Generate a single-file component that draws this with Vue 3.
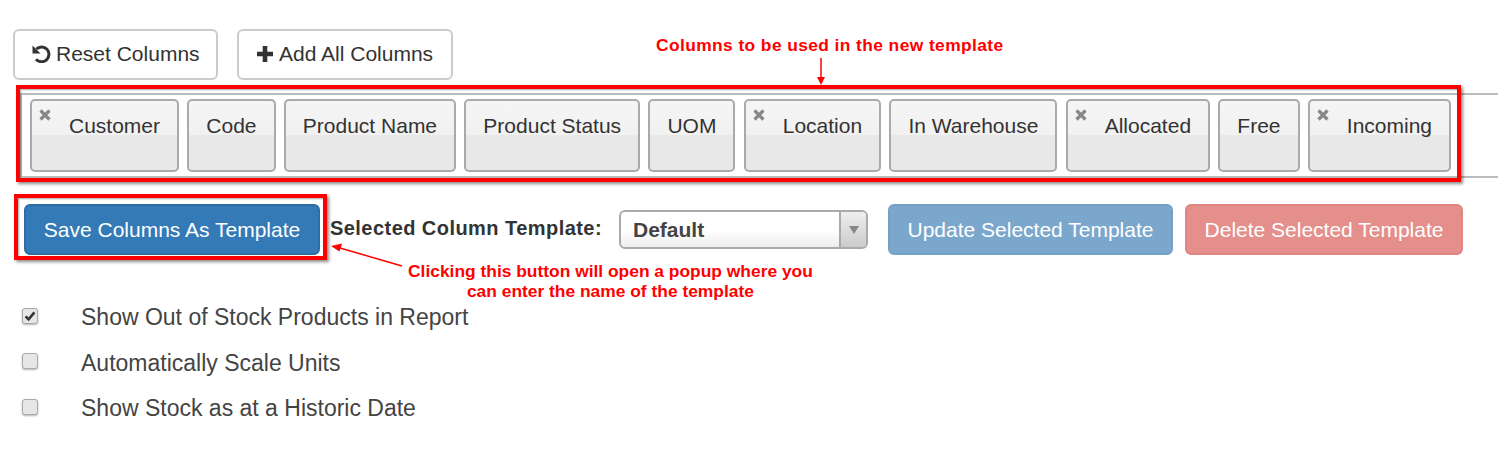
<script setup>
const columns = [
  { name: 'Customer', removable: true },
  { name: 'Code' },
  { name: 'Product Name' },
  { name: 'Product Status' },
  { name: 'UOM' },
  { name: 'Location', removable: true },
  { name: 'In Warehouse' },
  { name: 'Allocated', removable: true },
  { name: 'Free' },
  { name: 'Incoming', removable: true },
]

const options = [
  { label: 'Show Out of Stock Products in Report', checked: true },
  { label: 'Automatically Scale Units', checked: false },
  { label: 'Show Stock as at a Historic Date', checked: false },
]
</script>

<template>
  <div class="page">
    <div class="toolbar">
      <button class="btn btn-reset">
        <svg class="icon-reset" viewBox="0 0 19 19" width="19" height="19">
          <path d="M4.4 5A7.4 7.4 0 1 1 4 15.2" fill="none" stroke="#333" stroke-width="3" />
          <path d="M0.5 1.5V9.5H8.5z" fill="#333" />
        </svg>
        Reset Columns
      </button>
      <button class="btn btn-add">
        <svg class="icon-plus" viewBox="0 0 16 16" width="16" height="16">
          <path d="M5.7 0h4.6v5.7H16v4.6h-5.7V16H5.7v-5.7H0V5.7h5.7z" fill="#333" />
        </svg>
        Add All Columns
      </button>
    </div>

    <div class="column-bar">
      <div
        v-for="col in columns"
        :key="col.name"
        class="chip"
        :class="{ removable: col.removable }"
      >
        <svg v-if="col.removable" class="chip-x" viewBox="0 0 12 12" width="12" height="12">
          <path d="M1.5 1.5l9 9M10.5 1.5l-9 9" stroke="#888" stroke-width="3.2" />
        </svg>
        {{ col.name }}
      </div>
      <div class="mark mark-columns"></div>
    </div>

    <div class="template-row">
      <div class="save-wrap">
        <button class="btn-solid btn-save">Save Columns As Template</button>
        <div class="mark mark-save"></div>
      </div>
      <span class="template-label">Selected Column Template:</span>
      <div class="select">
        <span class="select-value">Default</span>
        <span class="select-arrow"><i></i></span>
      </div>
      <button class="btn-solid btn-update">Update Selected Template</button>
      <button class="btn-solid btn-delete">Delete Selected Template</button>
    </div>

    <div class="options">
      <label v-for="opt in options" :key="opt.label" class="option">
        <span class="check">
          <svg v-if="opt.checked" viewBox="0 0 12 12" width="12" height="12">
            <path d="M1.6 6.4l3 3 5.8-7" fill="none" stroke="#333" stroke-width="2.6" />
          </svg>
        </span>
        <span>{{ opt.label }}</span>
      </label>
    </div>

    <!-- annotations on top of the screenshot -->
    <div class="note note-columns">Columns to be used in the new template</div>
    <div class="note note-save">Clicking this button will open a popup where you<br>can enter the name of the template</div>
    <svg class="arrows" width="1498" height="462" viewBox="0 0 1498 462">
      <path d="M821 58v20" stroke="#f00" stroke-width="1.5" />
      <path d="M817 77h8l-4 8z" fill="#f00" />
      <path d="M402 266L340 248" stroke="#f00" stroke-width="1.5" />
      <path d="M331 246l11-2.5-2.5 8z" fill="#f00" />
    </svg>
  </div>
</template>

<style>
html, body {
  margin: 0;
  background: #fff;
}
</style>

<style scoped>
.page {
  position: relative;
  box-sizing: border-box;
  width: 1498px;
  height: 462px;
  padding: 29px 0 0 13px;
  overflow: hidden;
  font-family: "Liberation Sans", Arial, sans-serif;
  color: #333;
}

.toolbar {
  display: flex;
  gap: 19px;
}

.btn {
  height: 51px;
  box-sizing: border-box;
  display: flex;
  align-items: center;
  background: #fff;
  border: 2px solid #ccc;
  border-radius: 6px;
  font: 21px "Liberation Sans", Arial, sans-serif;
  color: #333;
}

.btn-reset {
  width: 205px;
  padding: 0 0 2px 17px;
  gap: 5px;
}

.btn-add {
  width: 216px;
  padding: 0 0 2px 18px;
  gap: 6px;
}

.column-bar {
  position: relative;
  display: flex;
  gap: 8.3px;
  height: 85px;
  box-sizing: border-box;
  margin: 13px 0 0 7px;
  padding: 4px 0 0 8px;
  border: solid #bbb;
  border-width: 2px 0 2px 2px;
}

.chip {
  position: relative;
  box-sizing: border-box;
  height: 73px;
  padding: 13px 17px 0;
  border: 2px solid #aaa;
  border-radius: 5px;
  background: linear-gradient(#f5f5f5 0, #f1f1f1 50%, #e8e8e8 50%, #e8e8e8 100%);
  font-size: 21px;
  line-height: 24px;
  white-space: nowrap;
  color: #333;
}

.chip.removable {
  padding-left: 37px;
}

.chip-x {
  position: absolute;
  left: 7px;
  top: 8px;
}

.mark {
  position: absolute;
  border: 4px solid #f00;
  box-shadow: 2px 2px 3px rgba(0, 0, 0, 0.45), inset 1px 1px 2px rgba(0, 0, 0, 0.35);
  pointer-events: none;
}

.mark-columns {
  left: -6px;
  top: -10px;
  width: 1445px;
  height: 97px;
  box-sizing: border-box;
}

.template-row {
  display: flex;
  align-items: flex-start;
  margin: 26px 0 0 11px;
}

.save-wrap {
  position: relative;
  margin-right: 10px;
}

.mark-save {
  left: -10px;
  top: -10px;
  width: 313px;
  height: 66px;
  box-sizing: border-box;
}

.btn-solid {
  display: block;
  height: 51px;
  box-sizing: border-box;
  border-radius: 6px;
  border: 2px solid;
  color: #fff;
  font: 21px "Liberation Sans", Arial, sans-serif;
}

.btn-save {
  width: 296px;
  background: #337ab7;
  border-color: #2e6da4;
}

.template-label {
  width: 289px;
  margin-top: 11px;
  font-size: 20px;
  line-height: 26px;
  font-weight: bold;
  letter-spacing: 0.45px;
  white-space: nowrap;
}

.select {
  display: flex;
  width: 249px;
  height: 39px;
  margin: 6px 20px 0 0;
  box-sizing: border-box;
  border: 2px solid #aaa;
  border-radius: 6px;
  overflow: hidden;
  background: linear-gradient(#fff 0, #fff 50%, #eee 100%);
}

.select-value {
  flex: 1;
  padding-left: 12px;
  font-size: 21px;
  font-weight: bold;
  line-height: 36px;
  color: #444;
}

.select-arrow {
  width: 25px;
  display: flex;
  align-items: center;
  justify-content: center;
  border-left: 2px solid #aaa;
  background: linear-gradient(#eee, #ccc);
}

.select-arrow i {
  width: 0;
  height: 0;
  border: solid transparent;
  border-width: 8px 5px 0;
  border-top-color: #888;
}

.btn-update {
  width: 285px;
  margin-right: 12px;
  background: #7ba7cd;
  border-color: #75a0c6;
}

.btn-delete {
  width: 278px;
  background: #e48f8b;
  border-color: #e08581;
}

.options {
  margin: 40px 0 0 9px;
}

.option {
  display: flex;
  align-items: center;
  height: 45.5px;
  font-size: 23px;
  color: #444;
}

.check {
  display: flex;
  align-items: center;
  justify-content: center;
  flex: none;
  box-sizing: border-box;
  width: 16px;
  height: 16px;
  margin: -4px 43px 0 0;
  border: 1px solid #aaa;
  border-radius: 3px;
  background: #e6e6e6;
  box-shadow: 0 1px 2px rgba(0, 0, 0, 0.3);
}

.note {
  position: absolute;
  font-weight: bold;
  font-size: 17.4px;
  line-height: 20px;
  color: #f00;
  text-align: center;
  white-space: nowrap;
}

.note-columns {
  left: 656px;
  top: 35px;
  letter-spacing: 0.4px;
}

.note-save {
  left: 408px;
  top: 261px;
}

.arrows {
  position: absolute;
  left: 0;
  top: 0;
  pointer-events: none;
}
</style>
